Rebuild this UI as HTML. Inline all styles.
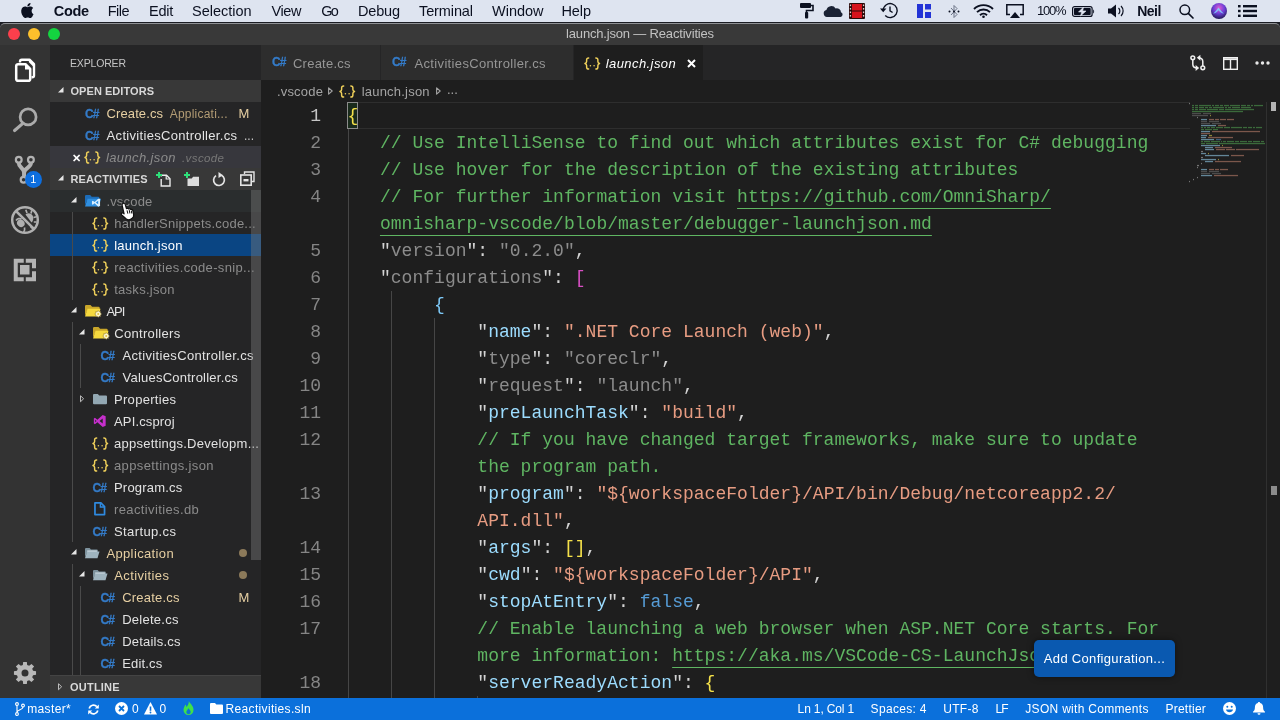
<!DOCTYPE html>
<html lang="en">
<head>
<meta charset="utf-8">
<title>launch.json — Reactivities</title>
<style>
*{box-sizing:border-box;margin:0;padding:0}
html,body{width:1280px;height:720px;overflow:hidden;background:#1e1e1e}
body{position:relative;will-change:transform;font-family:"Liberation Sans",sans-serif;font-size:13px;color:#ccc;-webkit-font-smoothing:antialiased}
.abs{position:absolute}
svg{display:block;overflow:visible}
/* mac menu bar */
#menubar{left:0;top:0;width:1280px;height:22px;background:#dee4f0;color:#0b1020;font-size:14.500px;line-height:22px;white-space:nowrap}
#menubar span.mi{position:absolute;top:0;height:22px}
/* title bar */
#titlebar{left:0;top:23px;width:1280px;height:22px;background:#393939;border-top:1px solid #8e9094;border-radius:5px 5px 0 0}
#titlebar .t{position:absolute;left:0;width:1280px;top:0;text-align:center;font-size:13px;line-height:20px;color:#c2c2c2;letter-spacing:-.18px}
.dot{position:absolute;top:4px;width:12px;height:12px;border-radius:50%}
/* activity */
#activity{left:0;top:45px;width:50px;height:653px;background:#333333}
/* sidebar */
#sidebar{left:50px;top:45px;width:211px;z-index:2;height:653px;background:#252526;overflow:hidden}
.hdr{position:absolute;left:0;width:211px;height:22px;background:#383838;font-weight:bold;font-size:11px;line-height:22px;color:#d8d8d8;}
.hdr .tx{position:absolute;left:20px;top:0}
.row{position:absolute;left:0;width:211px;height:22px;line-height:22px;font-size:13px;color:#e2e2e2;white-space:nowrap;overflow:hidden}
.row .tx{position:absolute;top:.5px}
.row svg{margin-top:0}
.row .cs{margin-top:.5px}
.cs{-webkit-text-stroke:.3px #347bc8;font-weight:bold;font-size:12px;color:#347bc8;letter-spacing:-.8px;line-height:22px;height:22px}
.dim{color:#8b8b8b}
.mod{color:#e6cfa2}
.desc{font-size:12px;color:#8f8f8f;margin-left:6px}
/* editor */
#tabs{left:260px;top:45px;width:1020px;height:35px;background:#252526}
.tab{position:absolute;top:0;height:35px;background:#2d2d2d;font-size:13px;line-height:35px;color:#969696;border-right:1px solid #252526}
.tab .tx{position:absolute;top:1px}
#crumbs{left:260px;top:80px;width:1020px;height:22px;background:#1e1e1e;font-size:13px;line-height:22px;color:#a4a4a4}
#editor{left:260px;top:102px;width:1020px;height:596px;background:#1e1e1e;overflow:hidden}
.ln{position:absolute;left:0;margin-top:1px;width:61px;text-align:right;font-family:"Liberation Mono",monospace;font-size:18px;line-height:27px;color:#858585;height:27px}
.cl{position:absolute;left:87.5px;margin-top:1px;font-family:"Liberation Mono",monospace;font-size:18px;line-height:27px;height:27px;white-space:pre;color:#d4d4d4;letter-spacing:.02px}
.c{color:#5fb562}
.k{color:#9cdcfe}
.s{color:#e79c82}
.g{color:#8c8c8c}
.b{color:#569cd6}
.u{text-decoration:underline;text-underline-offset:6px;text-decoration-thickness:1px}
.guide{position:absolute;width:1px;background:#464646}
/* status */
#status{left:0;top:698px;width:1280px;height:22px;background:#0b70db;color:#fff;font-size:12px;line-height:22.500px;white-space:nowrap}
#status span.si{position:absolute;top:0}
</style>
</head>
<body>

<!-- MENUBAR -->
<div id="menubar" class="abs">
  <svg class="abs" style="left:20px;top:2px" width="14" height="17" viewBox="0 0 14 17"><path fill="#0b1020" d="M11.6 9c0-1.9 1.5-2.8 1.6-2.9-.9-1.3-2.300-1.500-2.800-1.500-1.200-.1-2.300.7-2.900.7s-1.500-.7-2.500-.7C3.700 4.600 2.500 5.400 1.800 6.500.500 8.800 1.500 12.200 2.800 14.100c.6.900 1.400 1.900 2.400 1.900 1-.04 1.300-.6 2.500-.6 1.100 0 1.500.6 2.500.6s1.700-.9 2.300-1.800c.700-1 1-2.100 1-2.100S11.600 11.400 11.600 9zM9.700 3.300C10.200 2.700 10.600 1.800 10.500.900c-.8.030-1.700.5-2.300 1.200-.5.600-.900 1.500-.800 2.300.9.070 1.800-.4 2.300-1.100z"/></svg>
  <span class="mi" style="left:53.75px;letter-spacing:-0.333px;font-weight:bold">Code</span>
  <span class="mi" style="left:107.75px;letter-spacing:-0.536px">File</span>
  <span class="mi" style="left:149px;letter-spacing:-0.245px">Edit</span>
  <span class="mi" style="left:192px;letter-spacing:-0.018px">Selection</span>
  <span class="mi" style="left:271.5px;letter-spacing:-0.385px">View</span>
  <span class="mi" style="left:321.25px;letter-spacing:-1.844px">Go</span>
  <span class="mi" style="left:358px;letter-spacing:-0.18px">Debug</span>
  <span class="mi" style="left:419px;letter-spacing:-0.112px">Terminal</span>
  <span class="mi" style="left:492px;letter-spacing:-0.013px">Window</span>
  <span class="mi" style="left:561.5px;letter-spacing:-0.104px">Help</span>
  <!-- right icons -->
  <svg class="abs" style="left:800px;top:3px" width="14" height="16" viewBox="0 0 14 16"><rect x="0" y="0" width="11" height="5" rx="1" fill="#0b1020"/><path d="M11 2.500h2v5H6.500v2.500" fill="none" stroke="#0b1020" stroke-width="1.600"/><rect x="5" y="9" width="3.200" height="6.500" rx="1" fill="#0b1020"/></svg>
  <svg class="abs" style="left:822px;top:5px" width="22" height="12" viewBox="0 0 22 12"><path fill="#1a2234" d="M5 12a3.500 3.500 0 0 1-.6-6.900A5 5 0 0 1 13.600 3.500 4.200 4.200 0 0 1 19 7.200 2.500 2.500 0 0 1 18.500 12z"/></svg>
  <svg class="abs" style="left:849px;top:3px" width="16" height="16" viewBox="0 0 16 16"><rect width="16" height="16" rx="1" fill="#2a0a0a"/><rect x="3" y="1" width="10" height="6.500" fill="#d6121c"/><rect x="3" y="8.500" width="10" height="6.500" fill="#d6121c"/><g fill="#e8c9c9"><rect x="0.800" y="1.500" width="1.300" height="1.600"/><rect x="0.800" y="5" width="1.300" height="1.600"/><rect x="0.800" y="8.500" width="1.300" height="1.600"/><rect x="0.800" y="12" width="1.300" height="1.600"/><rect x="13.900" y="1.500" width="1.300" height="1.600"/><rect x="13.900" y="5" width="1.300" height="1.600"/><rect x="13.900" y="8.500" width="1.300" height="1.600"/><rect x="13.900" y="12" width="1.300" height="1.600"/></g></svg>
  <svg class="abs" style="left:879px;top:2px" width="19" height="17" viewBox="0 0 19 17"><path d="M4.200 8.500a7 7 0 1 1 2 5" fill="none" stroke="#0b1020" stroke-width="1.400"/><path d="M1 6.500h6.400L4.200 10.200z" fill="#0b1020"/><path d="M11 4.500v4.300l2.600 1.700" fill="none" stroke="#0b1020" stroke-width="1.400"/></svg>
  <svg class="abs" style="left:917px;top:4px" width="14" height="14" viewBox="0 0 14 14"><rect width="6" height="14" fill="#2233d6"/><rect x="8" y="0" width="6" height="5.500" fill="#2233d6"/><rect x="8" y="8" width="6" height="6" fill="#2233d6"/></svg>
  <svg class="abs" style="left:948px;top:4px" width="12" height="15" viewBox="0 0 12 15"><path d="M3 4l6 6.500-3 3V1.500l3 3L3 11" fill="none" stroke="#6b7386" stroke-width="1"/><circle cx="1.500" cy="7.500" r="1" fill="#0b1020"/><circle cx="10.500" cy="7.500" r="1" fill="#0b1020"/><circle cx="6" cy="7.500" r="1" fill="#0b1020"/></svg>
  <svg class="abs" style="left:973px;top:4px" width="21" height="14" viewBox="0 0 21 14"><g fill="none" stroke="#0b1020" stroke-width="1.900"><path d="M1 5a13.500 13.500 0 0 1 19 0"/><path d="M4 8.200a9.200 9.200 0 0 1 13 0"/><path d="M7 11.200a5 5 0 0 1 7 0"/></g><circle cx="10.500" cy="12.800" r="1.300" fill="#0b1020"/></svg>
  <svg class="abs" style="left:1006px;top:4px" width="18" height="14" viewBox="0 0 18 14"><path d="M4 10.500H.8V.8h16.400v9.700H14" fill="none" stroke="#0b1020" stroke-width="1.500"/><path d="M9 8l5 6H4z" fill="#0b1020"/></svg>
  <span class="mi" style="left:1037px;font-size:13px;letter-spacing:-1.222px">100%</span>
  <svg class="abs" style="left:1072px;top:6px" width="23" height="11" viewBox="0 0 23 11"><rect x=".6" y=".6" width="19.500" height="9.800" rx="2" fill="none" stroke="#0b1020" stroke-width="1.200"/><rect x="2" y="2" width="16.700" height="7" rx=".8" fill="#0b1020"/><path d="M21.200 3.500v4c1.200-.3 1.200-3.700 0-4z" fill="#0b1020"/><path d="M11.500 1L6.500 6h3.200L8.500 10l5.500-5h-3.300z" fill="#dee4f0" stroke="#dee4f0" stroke-width=".6"/></svg>
  <svg class="abs" style="left:1108px;top:4px" width="18" height="14" viewBox="0 0 18 14"><path d="M0 4.500h3L8 .5v13L3 9.500H0z" fill="#0b1020"/><path d="M10.500 4a4 4 0 0 1 0 6M13 2a7 7 0 0 1 0 10" fill="none" stroke="#0b1020" stroke-width="1.200"/></svg>
  <span class="mi" style="left:1137.300px;font-weight:bold;font-size:14px;letter-spacing:-0.557px">Neil</span>
  <svg class="abs" style="left:1179px;top:4px" width="15" height="15" viewBox="0 0 15 15"><circle cx="5.800" cy="5.800" r="4.800" fill="none" stroke="#0b1020" stroke-width="1.500"/><path d="M9.300 9.300l4.700 4.700" stroke="#0b1020" stroke-width="1.700" stroke-linecap="round"/></svg>
  <div class="abs" style="left:1210.500px;top:2.500px;width:16.500px;height:16.500px;border-radius:50%;background:radial-gradient(circle at 50% 32%,#e45ad2 0%,#6a3fd6 42%,#1a1546 85%)"></div>
  <svg class="abs" style="left:1210px;top:2px" width="17" height="17" viewBox="0 0 17 17"><path d="M3 11.500c2-1 3.500-3.500 5.500-6 2 2.500 3.500 5 5.500 6-2.500-.2-4-1.500-5.500-3.300C7 10 5.500 11.300 3 11.500z" fill="#7fd6ff" opacity=".85"/></svg>
  <svg class="abs" style="left:1238px;top:5px" width="19" height="12" viewBox="0 0 19 12"><g fill="#0b1020"><rect x="0" y="0" width="2.600" height="2.400"/><rect x="0" y="4.800" width="2.600" height="2.400"/><rect x="0" y="9.600" width="2.600" height="2.400"/><rect x="5" y="0" width="14" height="2.400"/><rect x="5" y="4.800" width="14" height="2.400"/><rect x="5" y="9.600" width="14" height="2.400"/></g></svg>
</div>

<!-- TITLEBAR -->
<div class="abs" style="left:0;top:22px;width:1280px;height:8px;background:#1b1d24"></div>
<div id="titlebar" class="abs">
  <div class="dot" style="left:8px;background:#fc3f4c"></div>
  <div class="dot" style="left:28px;background:#fdc02c"></div>
  <div class="dot" style="left:48px;background:#14d440"></div>
  <div class="t">launch.json — Reactivities</div>
</div>

<!-- ACTIVITY BAR -->
<div id="activity" class="abs">
  <!-- explorer + search -->
  <svg class="abs" style="left:0;top:0" width="50" height="100" viewBox="0 45 50 100"><g fill="none" stroke="#fff" stroke-linejoin="round"><path d="M20 62.500V61.500a1.800 1.800 0 0 1 1.800-1.800h7.700l4.500 4.500v11.300a1.800 1.800 0 0 1-1.800 1.800H31.500" stroke-width="2.400"/><path d="M16.200 66a1.800 1.800 0 0 1 1.800-1.800h7.500l4.700 4.700V79a1.800 1.800 0 0 1-1.800 1.800H18a1.800 1.800 0 0 1-1.800-1.800z" stroke-width="2.500"/></g><path d="M25 64v5.500h5.500z" fill="#fff"/><path d="M29.500 59.500l4.700 4.700v11.500h-1V66.500l-4.500-4.500z" fill="#fff"/>
  <circle cx="28.100" cy="116.900" r="8" fill="none" stroke="#ababab" stroke-width="2.700"/><path d="M22.300 123.900L14.600 130.500" stroke="#ababab" stroke-width="3.200" stroke-linecap="round"/></svg>
  <!-- git -->
  <svg class="abs" style="left:0;top:100px" width="50" height="60" viewBox="0 145 50 60"><g fill="none" stroke="#b2b2b2"><path d="M18.750 163c0 4.500 5.300 5 5.300 9.500v4M30.900 163c0 4.500-6.500 5-6.800 9.500" stroke-width="4"/><circle cx="18.750" cy="159.700" r="2.900" stroke-width="2.200" fill="#333"/><circle cx="30.900" cy="159.700" r="2.900" stroke-width="2.200" fill="#333"/><circle cx="23.600" cy="179.700" r="2.900" stroke-width="2.200" fill="#333"/></g></svg>
  <div class="abs" style="left:24.500px;top:125.500px;width:17.500px;height:17.500px;border-radius:50%;background:#0d6ede;color:#fff;font-size:11px;line-height:17.500px;text-align:center">1</div>
  <!-- debug + extensions -->
  <svg class="abs" style="left:0;top:150px" width="50" height="100" viewBox="0 195 50 100"><g fill="none" stroke="#b0b0b0"><circle cx="25" cy="220" r="12.800" stroke-width="2.500"/><path d="M15.800 210.800L34.200 229.200" stroke-width="2.600"/><path d="M16 220.500c1.500-2 4-2.500 5.500-1.500M24.500 227.500c.5 2 .2 3.500-1 5M27 213l-1.200-3.200M31 213.500l.8-3.200M33.500 217.500l3-.8M33.800 222h2.800M30.500 227c1.500.5 2.500 1.500 3 3" stroke-width="1.700"/></g><ellipse cx="20.800" cy="223.300" rx="3.600" ry="4" fill="#b0b0b0" transform="rotate(-40 20.800 223.300)"/><path d="M25.500 214.500c2.200-2.200 6-1.200 7.300 1.500 1 2.300.5 5-1.300 6.500z" fill="#b0b0b0"/>
  <g fill="#b4b4b4"><path d="M13.750 258.750h10v4h-6v14.500h6v4h-10z"/><path d="M25.800 258.750H36v9.600h-4v-5.600h-6.200z"/><path d="M25.800 281.250H36v-9.900h-4v5.900h-6.200z"/><rect x="20" y="265" width="9.500" height="9.500"/></g></svg>
  <!-- gear -->
  <svg class="abs" style="left:0;top:0" width="50" height="653" viewBox="0 0 50 653"><path fill="#b8b8b8" fill-rule="evenodd" d="M33.02 625.85L36.05 626.15L36.05 629.85L33.02 630.15L32.19 632.15L34.12 634.50L31.50 637.12L29.15 635.19L27.15 636.02L26.85 639.05L23.15 639.05L22.85 636.02L20.85 635.19L18.50 637.12L15.88 634.50L17.81 632.15L16.98 630.15L13.95 629.85L13.95 626.15L16.98 625.85L17.81 623.85L15.88 621.50L18.50 618.88L20.85 620.81L22.85 619.98L23.15 616.95L26.85 616.95L27.15 619.98L29.15 620.81L31.50 618.88L34.12 621.50L32.19 623.85zM21.50 628.00 a3.500 3.500 0 1 0 7 0 a3.500 3.500 0 1 0 -7 0z"/></svg>
</div>

<!-- SIDEBAR -->
<div id="sidebar" class="abs">


<div class="abs" style="left:20px;top:0;height:35px;line-height:36px;font-size:10.500px;color:#c4c4c4;letter-spacing:-.167px">EXPLORER</div>
<div class="hdr" style="top:35px;"><svg class="abs" style="left:7.5px;top:6.500px" width="5.500" height="5.500" viewBox="0 0 7 7" preserveAspectRatio="none"><path d="M7 0v7H0z" fill="#e6e6e6"/></svg><span class="tx " style="left:20.5px;;letter-spacing:0.05px">OPEN EDITORS</span></div>
<div class="row" style="top:57px;"><span class="abs cs" style="left:35px;top:0">C#</span><span class="tx mod" style="left:56.6px;;letter-spacing:0.095px">Create.cs</span><span class="tx " style="left:119.7px;color:#b39c74;font-size:12px;letter-spacing:0.223px">Applicati...</span><span class="tx mod" style="left:188.6px;">M</span></div>
<div class="row" style="top:79px;"><span class="abs cs" style="left:35px;top:0">C#</span><span class="tx " style="left:56.6px;color:#e4e4e4;letter-spacing:0.311px">ActivitiesController.cs</span><span class="tx " style="left:194px;color:#c8c8c8;font-size:12px">...</span></div>
<div class="row" style="top:101px;background:#37373d"><span class="tx " style="left:22px;color:#fff;font-size:11px;font-weight:bold">&#x2715;</span><svg class="abs" style="left:33.5px;top:4.5px" width="16.5" height="13" viewBox="0 0 17 13" preserveAspectRatio="none"><g fill="none" stroke="#efd05a" stroke-width="1.500" stroke-linecap="round" stroke-linejoin="round"><path d="M4.800 .9c-1.700 0-2.100.6-2.100 1.800v1.800c0 1.100-.6 1.700-1.700 2 1.100.3 1.700.9 1.700 2v1.800c0 1.200.4 1.800 2.100 1.800"/><path d="M12.200 .9c1.700 0 2.100.6 2.100 1.800v1.800c0 1.100.6 1.700 1.700 2-1.100.3-1.700.9-1.700 2v1.800c0 1.200-.4 1.800-2.100 1.800"/></g><circle cx="6.600" cy="8.800" r=".8" fill="#efd05a"/><circle cx="10.400" cy="8.800" r=".8" fill="#efd05a"/></svg><span class="tx dim" style="left:56px;font-style:italic;letter-spacing:0.37px">launch.json</span><span class="tx " style="left:132px;font-style:italic;font-size:11.500px;color:#777;letter-spacing:0.398px">.vscode</span></div>
<div class="hdr" style="top:123px;"><svg class="abs" style="left:7.5px;top:6.500px" width="5.500" height="5.500" viewBox="0 0 7 7" preserveAspectRatio="none"><path d="M7 0v7H0z" fill="#e6e6e6"/></svg><span class="tx " style="left:20.5px;;letter-spacing:0.117px">REACTIVITIES</span><svg class="abs" style="left:105.500px;top:4px" width="16" height="15" viewBox="0 0 16 15"><path d="M5.200 4.500V3.200h5.300l3.500 3.500v7.300H5.200V7" fill="none" stroke="#ececec" stroke-width="1.400"/><path d="M10.200 3.400v3.600h3.600" fill="none" stroke="#ececec" stroke-width="1.200"/><path d="M0 3h6M3 0v6" stroke="#2ee07a" stroke-width="2"/></svg>
<svg class="abs" style="left:133.500px;top:4px" width="16" height="15" viewBox="0 0 16 15"><path d="M3.500 6.500h4.200l1.400-1.800H15v9.300H3.500z" fill="#dcdcdc"/><path d="M0 3h6M3 0v6" stroke="#2ee07a" stroke-width="2"/></svg>
<svg class="abs" style="left:162px;top:4px" width="14" height="15" viewBox="0 0 14 15"><path d="M9.500 3.300A5.400 5.400 0 1 1 4 3.600" fill="none" stroke="#e4e4e4" stroke-width="1.700"/><path d="M6.500 0l4.500 3.200L6.500 6z" fill="#e4e4e4"/></svg>
<svg class="abs" style="left:190px;top:3px" width="15" height="15" viewBox="0 0 15 15"><path d="M4.500 3V1h9.500v9.500h-2" fill="none" stroke="#e4e4e4" stroke-width="1.400"/><rect x=".8" y="4" width="10.400" height="10.200" fill="none" stroke="#e4e4e4" stroke-width="1.600"/><rect x="3.500" y="8" width="5" height="2.400" fill="#e4e4e4"/></svg></div>
<div class="row" style="top:145px;background:#2a2d2e"><svg class="abs" style="left:21px;top:6.500px" width="5.500" height="5.500" viewBox="0 0 7 7" preserveAspectRatio="none"><path d="M7 0v7H0z" fill="#e6e6e6"/></svg><svg class="abs" style="left:34.5px;top:5.25px" width="16" height="11.5" viewBox="0 0 17 12" preserveAspectRatio="none"><path d="M0 1.200A1.200 1.200 0 0 1 1.200 0h4.300l1.600 1.700h6.900a1.200 1.200 0 0 1 1.200 1.200V4.500H3L0 10.500z" fill="#1c6cb8"/><path d="M2.700 3.800h14.300l-2.400 8.200H0z" fill="#2f8fe0"/><path d="M16 3.800v7.800l-1.900.6-3.900-3.600-1.900 1.500-.9-.5V6.400l.9-.5 1.900 1.500 3.900-3.600zM14 6L11.500 7.700 14 9.600z" fill="#d8eeff"/></svg><span class="tx dim" style="left:56.4px;;letter-spacing:0.181px">.vscode</span></div>
<div class="row" style="top:167px;"><svg class="abs" style="left:42px;top:4.5px" width="16.5" height="13" viewBox="0 0 17 13" preserveAspectRatio="none"><g fill="none" stroke="#efd05a" stroke-width="1.500" stroke-linecap="round" stroke-linejoin="round"><path d="M4.800 .9c-1.700 0-2.100.6-2.100 1.800v1.800c0 1.100-.6 1.700-1.700 2 1.100.3 1.700.9 1.700 2v1.800c0 1.200.4 1.800 2.100 1.800"/><path d="M12.200 .9c1.700 0 2.100.6 2.100 1.800v1.800c0 1.100.6 1.700 1.700 2-1.100.3-1.700.9-1.700 2v1.800c0 1.200-.4 1.800-2.100 1.800"/></g><circle cx="6.600" cy="8.800" r=".8" fill="#efd05a"/><circle cx="10.400" cy="8.800" r=".8" fill="#efd05a"/></svg><span class="tx dim" style="left:64.2px;;letter-spacing:0.221px">handlerSnippets.code...</span></div>
<div class="row" style="top:189px;background:#0a4583"><svg class="abs" style="left:42px;top:4.5px" width="16.5" height="13" viewBox="0 0 17 13" preserveAspectRatio="none"><g fill="none" stroke="#efd05a" stroke-width="1.500" stroke-linecap="round" stroke-linejoin="round"><path d="M4.800 .9c-1.700 0-2.100.6-2.100 1.800v1.800c0 1.100-.6 1.700-1.700 2 1.100.3 1.700.9 1.700 2v1.800c0 1.200.4 1.800 2.100 1.800"/><path d="M12.200 .9c1.700 0 2.100.6 2.100 1.800v1.800c0 1.100.6 1.700 1.700 2-1.100.3-1.700.9-1.700 2v1.800c0 1.200-.4 1.800-2.100 1.800"/></g><circle cx="6.600" cy="8.800" r=".8" fill="#efd05a"/><circle cx="10.400" cy="8.800" r=".8" fill="#efd05a"/></svg><span class="tx " style="left:64.2px;color:#fff;letter-spacing:0.25px">launch.json</span></div>
<div class="row" style="top:211px;"><svg class="abs" style="left:42px;top:4.5px" width="16.5" height="13" viewBox="0 0 17 13" preserveAspectRatio="none"><g fill="none" stroke="#efd05a" stroke-width="1.500" stroke-linecap="round" stroke-linejoin="round"><path d="M4.800 .9c-1.700 0-2.100.6-2.100 1.800v1.800c0 1.100-.6 1.700-1.700 2 1.100.3 1.700.9 1.700 2v1.800c0 1.200.4 1.800 2.100 1.800"/><path d="M12.200 .9c1.700 0 2.100.6 2.100 1.800v1.800c0 1.100.6 1.700 1.700 2-1.100.3-1.700.9-1.700 2v1.800c0 1.200-.4 1.800-2.100 1.800"/></g><circle cx="6.600" cy="8.800" r=".8" fill="#efd05a"/><circle cx="10.400" cy="8.800" r=".8" fill="#efd05a"/></svg><span class="tx dim" style="left:64.2px;;letter-spacing:0.34px">reactivities.code-snip...</span></div>
<div class="row" style="top:233px;"><svg class="abs" style="left:42px;top:4.5px" width="16.5" height="13" viewBox="0 0 17 13" preserveAspectRatio="none"><g fill="none" stroke="#efd05a" stroke-width="1.500" stroke-linecap="round" stroke-linejoin="round"><path d="M4.800 .9c-1.700 0-2.100.6-2.100 1.800v1.800c0 1.100-.6 1.700-1.700 2 1.100.3 1.700.9 1.700 2v1.800c0 1.200.4 1.800 2.100 1.800"/><path d="M12.200 .9c1.700 0 2.100.6 2.100 1.800v1.800c0 1.100.6 1.700 1.700 2-1.100.3-1.700.9-1.700 2v1.800c0 1.200-.4 1.800-2.100 1.800"/></g><circle cx="6.600" cy="8.800" r=".8" fill="#efd05a"/><circle cx="10.400" cy="8.800" r=".8" fill="#efd05a"/></svg><span class="tx dim" style="left:64.2px;;letter-spacing:0.276px">tasks.json</span></div>
<div class="row" style="top:255px;"><svg class="abs" style="left:21px;top:6.500px" width="5.500" height="5.500" viewBox="0 0 7 7" preserveAspectRatio="none"><path d="M7 0v7H0z" fill="#e6e6e6"/></svg><svg class="abs" style="left:34.8px;top:4.5px" width="17" height="13" viewBox="0 0 17 13" preserveAspectRatio="none"><path d="M0 1.200A1.200 1.200 0 0 1 1.200 0h4.300l1.600 1.700h6.400a1.200 1.200 0 0 1 1.200 1.200V4.500H3L0 10.500z" fill="#c9a62a"/><path d="M2.500 3.800h13l-1.800 7.700H0z" fill="#f5d93e"/><path d="M16.70 9.00L15.42 9.92L15.67 11.47L14.12 11.22L13.20 12.50L12.28 11.22L10.73 11.47L10.98 9.92L9.70 9.00L10.98 8.08L10.73 6.53L12.28 6.78L13.20 5.50L14.12 6.78L15.67 6.53L15.42 8.08z" fill="#fff8cc" stroke="#6a5714" stroke-width=".4"/><circle cx="13.2" cy="9" r="1" fill="#e2c340"/></svg><span class="tx " style="left:56.4px;;letter-spacing:-0.977px">API</span></div>
<div class="row" style="top:277px;"><svg class="abs" style="left:29px;top:6.500px" width="5.500" height="5.500" viewBox="0 0 7 7" preserveAspectRatio="none"><path d="M7 0v7H0z" fill="#e6e6e6"/></svg><svg class="abs" style="left:42.8px;top:4.5px" width="17" height="13" viewBox="0 0 17 13" preserveAspectRatio="none"><path d="M0 1.200A1.200 1.200 0 0 1 1.200 0h4.300l1.600 1.700h6.400a1.200 1.200 0 0 1 1.200 1.200V4.500H3L0 10.500z" fill="#c9a62a"/><path d="M2.500 3.800h13l-1.800 7.700H0z" fill="#f5d93e"/><path d="M16.70 9.00L15.42 9.92L15.67 11.47L14.12 11.22L13.20 12.50L12.28 11.22L10.73 11.47L10.98 9.92L9.70 9.00L10.98 8.08L10.73 6.53L12.28 6.78L13.20 5.50L14.12 6.78L15.67 6.53L15.42 8.08z" fill="#fff8cc" stroke="#6a5714" stroke-width=".4"/><circle cx="13.2" cy="9" r="1" fill="#e2c340"/></svg><span class="tx " style="left:64.2px;;letter-spacing:0.323px">Controllers</span></div>
<div class="row" style="top:299px;"><span class="abs cs" style="left:50.5px;top:0">C#</span><span class="tx " style="left:72.5px;;letter-spacing:0.338px">ActivitiesController.cs</span></div>
<div class="row" style="top:321px;"><span class="abs cs" style="left:50.5px;top:0">C#</span><span class="tx " style="left:72.5px;;letter-spacing:0.235px">ValuesController.cs</span></div>
<div class="row" style="top:343px;"><svg class="abs" style="left:29.5px;top:7px" width="4.300" height="7.500" viewBox="0 0 5 9" preserveAspectRatio="none"><path d="M.600.900L4.200 4.500 .600 8.100z" fill="none" stroke="#c8c8c8" stroke-width="1.100" stroke-linejoin="round"/></svg><svg class="abs" style="left:42.8px;top:5.9px" width="14" height="10.2" viewBox="0 0 16 12" preserveAspectRatio="none"><path d="M0 1.200A1.200 1.200 0 0 1 1.200 0h4.300l1.600 1.700h7.700a1.200 1.200 0 0 1 1.200 1.200V10.800a1.200 1.200 0 0 1-1.200 1.200H1.200A1.200 1.200 0 0 1 0 10.800z" fill="#93a8b3"/></svg><span class="tx " style="left:64px;;letter-spacing:0.304px">Properties</span></div>
<div class="row" style="top:365px;"><svg class="abs" style="left:43px;top:5px" width="13.5" height="12" viewBox="0 0 16 14" preserveAspectRatio="none"><path d="M11.500 0l3.500 1.500v11L11.500 14 5.200 8.400 2.300 10.700 1 10V4l1.300-.7 2.900 2.300zM11.500 4.200L7.700 7l3.800 2.800zM2.600 5.500v3L4.200 7z" fill="#c62fcc"/></svg><span class="tx " style="left:64px;;letter-spacing:0.15px">API.csproj</span></div>
<div class="row" style="top:387px;"><svg class="abs" style="left:42px;top:4.5px" width="16.5" height="13" viewBox="0 0 17 13" preserveAspectRatio="none"><g fill="none" stroke="#efd05a" stroke-width="1.500" stroke-linecap="round" stroke-linejoin="round"><path d="M4.800 .9c-1.700 0-2.100.6-2.100 1.800v1.800c0 1.100-.6 1.700-1.700 2 1.100.3 1.700.9 1.700 2v1.800c0 1.200.4 1.800 2.100 1.800"/><path d="M12.200 .9c1.700 0 2.100.6 2.100 1.800v1.800c0 1.100.6 1.700 1.700 2-1.100.3-1.700.9-1.700 2v1.800c0 1.200-.4 1.800-2.100 1.800"/></g><circle cx="6.600" cy="8.800" r=".8" fill="#efd05a"/><circle cx="10.400" cy="8.800" r=".8" fill="#efd05a"/></svg><span class="tx " style="left:64px;;letter-spacing:0.25px">appsettings.Developm...</span></div>
<div class="row" style="top:409px;"><svg class="abs" style="left:42px;top:4.5px" width="16.5" height="13" viewBox="0 0 17 13" preserveAspectRatio="none"><g fill="none" stroke="#efd05a" stroke-width="1.500" stroke-linecap="round" stroke-linejoin="round"><path d="M4.800 .9c-1.700 0-2.100.6-2.100 1.800v1.800c0 1.100-.6 1.700-1.700 2 1.100.3 1.700.9 1.700 2v1.800c0 1.200.4 1.800 2.100 1.800"/><path d="M12.200 .9c1.700 0 2.100.6 2.100 1.800v1.800c0 1.100.6 1.700 1.700 2-1.100.3-1.700.9-1.700 2v1.800c0 1.200-.4 1.800-2.100 1.800"/></g><circle cx="6.600" cy="8.800" r=".8" fill="#efd05a"/><circle cx="10.400" cy="8.800" r=".8" fill="#efd05a"/></svg><span class="tx dim" style="left:64px;;letter-spacing:0.374px">appsettings.json</span></div>
<div class="row" style="top:431px;"><span class="abs cs" style="left:42.5px;top:0">C#</span><span class="tx " style="left:64px;;letter-spacing:0.203px">Program.cs</span></div>
<div class="row" style="top:453px;"><svg class="abs" style="left:44.2px;top:4.25px" width="11.5" height="13.5" viewBox="0 0 12 14" preserveAspectRatio="none"><path d="M1 1h6.200L11 4.800V13H1z" fill="none" stroke="#2f8ae0" stroke-width="1.800" stroke-linejoin="round"/><path d="M6.700 1.200v4h4" fill="none" stroke="#2f8ae0" stroke-width="1.500"/></svg><span class="tx dim" style="left:64px;;letter-spacing:0.379px">reactivities.db</span></div>
<div class="row" style="top:475px;"><span class="abs cs" style="left:42.5px;top:0">C#</span><span class="tx " style="left:64px;;letter-spacing:0.385px">Startup.cs</span></div>
<div class="row" style="top:497px;"><svg class="abs" style="left:21px;top:6.500px" width="5.500" height="5.500" viewBox="0 0 7 7" preserveAspectRatio="none"><path d="M7 0v7H0z" fill="#e6e6e6"/></svg><svg class="abs" style="left:35px;top:5.9px" width="14.5" height="10.2" viewBox="0 0 15 10.500" preserveAspectRatio="none"><path d="M0 1.100A1.100 1.100 0 0 1 1.100 0h3.700l1.400 1.500h6a1.100 1.100 0 0 1 1.100 1.100V4H2.600L0 9.300z" fill="#7d929d"/><path d="M2.300 2.600h10v1.400h-10z" fill="#dce6ec"/><path d="M2.200 3.700h12.800l-2.100 6.800H0z" fill="#9fb4bf"/></svg><span class="tx mod" style="left:56.4px;;letter-spacing:0.367px">Application</span><span class="abs" style="left:189px;top:7px;width:8px;height:8px;border-radius:50%;background:#8c7a5a"></span></div>
<div class="row" style="top:519px;"><svg class="abs" style="left:29px;top:6.500px" width="5.500" height="5.500" viewBox="0 0 7 7" preserveAspectRatio="none"><path d="M7 0v7H0z" fill="#e6e6e6"/></svg><svg class="abs" style="left:43px;top:5.9px" width="14.5" height="10.2" viewBox="0 0 15 10.500" preserveAspectRatio="none"><path d="M0 1.100A1.100 1.100 0 0 1 1.100 0h3.700l1.400 1.500h6a1.100 1.100 0 0 1 1.100 1.100V4H2.600L0 9.300z" fill="#7d929d"/><path d="M2.300 2.600h10v1.400h-10z" fill="#dce6ec"/><path d="M2.200 3.700h12.800l-2.100 6.800H0z" fill="#9fb4bf"/></svg><span class="tx mod" style="left:64.3px;;letter-spacing:0.367px">Activities</span><span class="abs" style="left:189px;top:7px;width:8px;height:8px;border-radius:50%;background:#8c7a5a"></span></div>
<div class="row" style="top:541px;"><span class="abs cs" style="left:50.5px;top:0">C#</span><span class="tx mod" style="left:72.2px;;letter-spacing:0.207px">Create.cs</span><span class="tx mod" style="left:188.5px;">M</span></div>
<div class="row" style="top:563px;"><span class="abs cs" style="left:50.5px;top:0">C#</span><span class="tx " style="left:72.2px;;letter-spacing:0.25px">Delete.cs</span></div>
<div class="row" style="top:585px;"><span class="abs cs" style="left:50.5px;top:0">C#</span><span class="tx " style="left:72.2px;;letter-spacing:0.216px">Details.cs</span></div>
<div class="row" style="top:607px;"><span class="abs cs" style="left:50.5px;top:0">C#</span><span class="tx " style="left:72.2px;;letter-spacing:0.181px">Edit.cs</span></div>
<div class="abs" style="left:22px;top:167px;width:1px;height:88px;background:#4a4a4a"></div>
<div class="abs" style="left:22px;top:277px;width:1px;height:220px;background:#4a4a4a"></div>
<div class="abs" style="left:30px;top:299px;width:1px;height:44px;background:#4a4a4a"></div>
<div class="abs" style="left:22px;top:519px;width:1px;height:111px;background:#4a4a4a"></div>
<div class="abs" style="left:30px;top:541px;width:1px;height:89px;background:#4a4a4a"></div>
<div class="hdr" style="top:631px;top:630px;height:23px;border-top:1px solid #444"><svg class="abs" style="left:8px;top:7px" width="4.300" height="7.500" viewBox="0 0 5 9" preserveAspectRatio="none"><path d="M.600.900L4.200 4.500 .600 8.100z" fill="none" stroke="#c8c8c8" stroke-width="1.100" stroke-linejoin="round"/></svg><span class="tx " style="left:20px;;letter-spacing:0.22px">OUTLINE</span></div>
<div class="abs" style="left:201px;top:145px;width:10px;height:370px;background:rgba(121,121,121,.42)"></div>
<svg class="abs" style="left:68px;top:157px" width="18" height="19" viewBox="0 0 16 17"><path d="M4.500 1.200c.9-.5 1.700 0 1.900.8L7.500 6l.6-.2c.6-.2 1.200 0 1.500.5.700-.4 1.500-.200 1.800.4.800-.3 1.600.1 1.800.9l.7 3.400c.3 1.400-.2 2.800-1.300 3.600l-1 .7c-1.300.9-3 .9-4.200-.1L3.300 11.600c-.5-.5-.5-1.200 0-1.600.5-.4 1.100-.3 1.600.1l.5.5L3.600 2.900c-.2-.7.200-1.400.9-1.700z" fill="#fff" stroke="#111" stroke-width="1.100" stroke-linejoin="round"/><path d="M8 7.500l.8 3M10 7.300l.6 2.800M11.800 7.800l.5 2.500" stroke="#111" stroke-width=".9"/></svg>
</div>
<!-- TABS -->
<div id="tabs" class="abs">
  <div class="tab" style="left:0;width:121px"><span class="abs cs" style="left:12px;top:6px">C#</span><span class="tx" style="left:33px;letter-spacing:.232px">Create.cs</span></div>
  <div class="tab" style="left:121px;width:193px"><span class="abs cs" style="left:11px;top:6px">C#</span><span class="tx" style="left:33.500px;letter-spacing:.343px">ActivitiesController.cs</span></div>
  <div class="tab" style="left:314px;width:130px;background:#1e1e1e;color:#fff"><svg class="abs" style="left:9.500px;top:12px" width="16.500" height="13" viewBox="0 0 17 13" preserveAspectRatio="none"><g fill="none" stroke="#efd05a" stroke-width="1.500" stroke-linecap="round" stroke-linejoin="round"><path d="M4.800 .9c-1.700 0-2.100.6-2.100 1.800v1.800c0 1.100-.6 1.700-1.700 2 1.100.3 1.700.9 1.700 2v1.800c0 1.200.4 1.800 2.100 1.800"/><path d="M12.200 .9c1.700 0 2.100.6 2.100 1.800v1.800c0 1.100.6 1.700 1.700 2-1.100.3-1.700.9-1.700 2v1.800c0 1.200-.4 1.800-2.100 1.800"/></g><circle cx="6.600" cy="8.800" r=".8" fill="#efd05a"/><circle cx="10.400" cy="8.800" r=".8" fill="#efd05a"/></svg><span class="tx" style="left:31.700px;font-style:italic;letter-spacing:.43px">launch.json</span><svg class="abs" style="left:112.500px;top:14px" width="9" height="9" viewBox="0 0 9 9"><path d="M1 1l7 7M8 1L1 8" stroke="#fff" stroke-width="2"/></svg></div>
  <!-- actions -->
  <svg class="abs" style="left:930px;top:9px" width="16" height="18" viewBox="0 0 16 18"><g fill="none" stroke="#f0f0f0" stroke-width="1.500"><circle cx="2.800" cy="3.800" r="1.900"/><circle cx="12.800" cy="13.800" r="1.900"/><path d="M2.800 5.700v4.500c0 2.300 1.500 3.800 4.700 3.800M12.800 11.900V7.500c0-2.300-1.500-3.800-4.700-3.800"/></g><path d="M5.600 11l3.600 3L5.600 17z" fill="#f0f0f0"/><path d="M10.400 0.700L6.800 3.700l3.600 3z" fill="#f0f0f0"/></svg>
  <svg class="abs" style="left:962.500px;top:11.500px" width="15" height="13" viewBox="0 0 15 13"><rect x=".7" y=".7" width="13.600" height="11.600" fill="none" stroke="#f0f0f0" stroke-width="1.400"/><path d="M.7 2.200h13.600" stroke="#f0f0f0" stroke-width="1.800"/><path d="M7.500 2v10" stroke="#f0f0f0" stroke-width="1.400"/></svg>
  <svg class="abs" style="left:995px;top:16px" width="15" height="4" viewBox="0 0 15 4"><circle cx="2" cy="2" r="1.700" fill="#e8e8e8"/><circle cx="7.500" cy="2" r="1.700" fill="#e8e8e8"/><circle cx="13" cy="2" r="1.700" fill="#e8e8e8"/></svg>
</div>

<!-- BREADCRUMBS -->
<div id="crumbs" class="abs">
  <span class="abs" style="left:16.900px;top:.5px;letter-spacing:.198px">.vscode</span>
  <svg class="abs" style="left:68px;top:7px" width="5" height="8" viewBox="0 0 5 8"><path d="M.600.800L4.200 4 .600 7.200z" fill="none" stroke="#a4a4a4" stroke-width="1.100" stroke-linejoin="round"/></svg>
  <svg class="abs" style="left:79px;top:5px" width="16.500" height="13" viewBox="0 0 17 13" preserveAspectRatio="none"><g fill="none" stroke="#efd05a" stroke-width="1.500" stroke-linecap="round" stroke-linejoin="round"><path d="M4.800 .9c-1.700 0-2.100.6-2.100 1.800v1.800c0 1.100-.6 1.700-1.700 2 1.100.3 1.700.9 1.700 2v1.800c0 1.200.4 1.800 2.100 1.800"/><path d="M12.200 .9c1.700 0 2.100.6 2.100 1.800v1.800c0 1.100.6 1.700 1.700 2-1.100.3-1.700.9-1.700 2v1.800c0 1.200-.4 1.800-2.100 1.800"/></g><circle cx="6.600" cy="8.800" r=".8" fill="#efd05a"/><circle cx="10.400" cy="8.800" r=".8" fill="#efd05a"/></svg>
  <span class="abs" style="left:101.700px;top:.5px;letter-spacing:.21px">launch.json</span>
  <svg class="abs" style="left:176px;top:7px" width="5" height="8" viewBox="0 0 5 8"><path d="M.600.800L4.200 4 .600 7.200z" fill="none" stroke="#a4a4a4" stroke-width="1.100" stroke-linejoin="round"/></svg>
  <span class="abs" style="left:187px;top:-1px">...</span>
</div>

<!-- EDITOR -->
<div id="editor" class="abs">
<div class="abs" style="left:87px;top:0;width:843px;height:27px;border-top:1px solid #2e2e2e;border-bottom:1px solid #2e2e2e"></div>
<div class="abs" style="left:87px;top:0;width:11px;height:27px;border:1px solid #8c8c8c;background:#1a2b1c"></div>
<div class="guide" style="left:87.5px;top:27px;height:594px"></div>
<div class="guide" style="left:130.78px;top:189px;height:432px"></div>
<div class="guide" style="left:174.06px;top:216px;height:405px"></div>
<div class="guide" style="left:217.34px;top:594px;height:27px"></div>
<div class="ln" style="top:0px;color:#c6c6c6">1</div>
<div class="cl" style="top:0px;left:87.5px"><span style="color:#f5e14a">{</span></div>
<div class="ln" style="top:27px">2</div>
<div class="cl" style="top:27px;left:119.96px"><span class="c">// Use IntelliSense to find out which attributes exist for C# debugging</span></div>
<div class="ln" style="top:54px">3</div>
<div class="cl" style="top:54px;left:119.96px"><span class="c">// Use hover for the description of the existing attributes</span></div>
<div class="ln" style="top:81px">4</div>
<div class="cl" style="top:81px;left:119.96px"><span class="c">// For further information visit </span><span class="c u">https://github.com/OmniSharp/</span></div>
<div class="cl" style="top:108px;left:119.96px"><span class="c u">omnisharp-vscode/blob/master/debugger-launchjson.md</span></div>
<div class="ln" style="top:135px">5</div>
<div class="cl" style="top:135px;left:119.96px">"<span class="g">version</span>": <span class="g">"0.2.0"</span>,</div>
<div class="ln" style="top:162px">6</div>
<div class="cl" style="top:162px;left:119.96px">"<span class="g">configurations</span>": <span style="color:#d94fc5">[</span></div>
<div class="ln" style="top:189px">7</div>
<div class="cl" style="top:189px;left:174.06px"><span style="color:#7cc7f5">{</span></div>
<div class="ln" style="top:216px">8</div>
<div class="cl" style="top:216px;left:217.34px">"<span class="k">name</span>": <span class="s">".NET Core Launch (web)"</span>,</div>
<div class="ln" style="top:243px">9</div>
<div class="cl" style="top:243px;left:217.34px">"<span class="g">type</span>": <span class="g">"coreclr"</span>,</div>
<div class="ln" style="top:270px">10</div>
<div class="cl" style="top:270px;left:217.34px">"<span class="g">request</span>": <span class="g">"launch"</span>,</div>
<div class="ln" style="top:297px">11</div>
<div class="cl" style="top:297px;left:217.34px">"<span class="k">preLaunchTask</span>": <span class="s">"build"</span>,</div>
<div class="ln" style="top:324px">12</div>
<div class="cl" style="top:324px;left:217.34px"><span class="c">// If you have changed target frameworks, make sure to update</span></div>
<div class="cl" style="top:351px;left:217.34px"><span class="c">the program path.</span></div>
<div class="ln" style="top:378px">13</div>
<div class="cl" style="top:378px;left:217.34px">"<span class="k">program</span>": <span class="s">"${workspaceFolder}/API/bin/Debug/netcoreapp2.2/</span></div>
<div class="cl" style="top:405px;left:217.34px"><span class="s">API.dll"</span>,</div>
<div class="ln" style="top:432px">14</div>
<div class="cl" style="top:432px;left:217.34px">"<span class="k">args</span>": <span style="color:#f5e14a">[]</span>,</div>
<div class="ln" style="top:459px">15</div>
<div class="cl" style="top:459px;left:217.34px">"<span class="k">cwd</span>": <span class="s">"${workspaceFolder}/API"</span>,</div>
<div class="ln" style="top:486px">16</div>
<div class="cl" style="top:486px;left:217.34px">"<span class="k">stopAtEntry</span>": <span class="b">false</span>,</div>
<div class="ln" style="top:513px">17</div>
<div class="cl" style="top:513px;left:217.34px"><span class="c">// Enable launching a web browser when ASP.NET Core starts. For</span></div>
<div class="cl" style="top:540px;left:217.34px"><span class="c">more information: </span><span class="c u">https://aka.ms/VSCode-CS-LaunchJson-WebBrowser</span></div>
<div class="ln" style="top:567px">18</div>
<div class="cl" style="top:567px;left:217.34px">"<span class="k">serverReadyAction</span>": <span style="color:#f5e14a">{</span></div>
<div class="ln" style="top:594px">19</div>
<div class="cl" style="top:594px;left:260.62px">"<span class="k">action</span>": <span class="s">"openExternally"</span>,</div>
<svg class="abs" style="left:929px;top:0" width="78" height="90" viewBox="0 0 78 90"><rect x="0" y="0.9" width="1" height="1.3" fill="#c8c8c8" opacity="0.5"/><rect x="3" y="2.9" width="2" height="1.3" fill="#57b357" opacity="0.5"/><rect x="6" y="2.9" width="3" height="1.3" fill="#57b357" opacity="0.5"/><rect x="10" y="2.9" width="12" height="1.3" fill="#57b357" opacity="0.5"/><rect x="23" y="2.9" width="2" height="1.3" fill="#57b357" opacity="0.5"/><rect x="26" y="2.9" width="4" height="1.3" fill="#57b357" opacity="0.5"/><rect x="31" y="2.9" width="3" height="1.3" fill="#57b357" opacity="0.5"/><rect x="35" y="2.9" width="5" height="1.3" fill="#57b357" opacity="0.5"/><rect x="41" y="2.9" width="10" height="1.3" fill="#57b357" opacity="0.5"/><rect x="52" y="2.9" width="5" height="1.3" fill="#57b357" opacity="0.5"/><rect x="58" y="2.9" width="3" height="1.3" fill="#57b357" opacity="0.5"/><rect x="62" y="2.9" width="2" height="1.3" fill="#57b357" opacity="0.5"/><rect x="65" y="2.9" width="9" height="1.3" fill="#57b357" opacity="0.5"/><rect x="3" y="4.9" width="2" height="1.3" fill="#57b357" opacity="0.5"/><rect x="6" y="4.9" width="3" height="1.3" fill="#57b357" opacity="0.5"/><rect x="10" y="4.9" width="5" height="1.3" fill="#57b357" opacity="0.5"/><rect x="16" y="4.9" width="3" height="1.3" fill="#57b357" opacity="0.5"/><rect x="20" y="4.9" width="3" height="1.3" fill="#57b357" opacity="0.5"/><rect x="24" y="4.9" width="11" height="1.3" fill="#57b357" opacity="0.5"/><rect x="36" y="4.9" width="2" height="1.3" fill="#57b357" opacity="0.5"/><rect x="39" y="4.9" width="3" height="1.3" fill="#57b357" opacity="0.5"/><rect x="43" y="4.9" width="8" height="1.3" fill="#57b357" opacity="0.5"/><rect x="52" y="4.9" width="10" height="1.3" fill="#57b357" opacity="0.5"/><rect x="3" y="6.9" width="2" height="1.3" fill="#57b357" opacity="0.5"/><rect x="6" y="6.9" width="3" height="1.3" fill="#57b357" opacity="0.5"/><rect x="10" y="6.9" width="7" height="1.3" fill="#57b357" opacity="0.5"/><rect x="18" y="6.9" width="11" height="1.3" fill="#57b357" opacity="0.5"/><rect x="30" y="6.9" width="5" height="1.3" fill="#57b357" opacity="0.5"/><rect x="36" y="6.9" width="29" height="1.3" fill="#57b357" opacity="0.5"/><rect x="3" y="8.9" width="51" height="1.3" fill="#57b357" opacity="0.5"/><rect x="3" y="10.9" width="9" height="1.3" fill="#909090" opacity="0.4"/><rect x="14" y="10.9" width="8" height="1.3" fill="#909090" opacity="0.4"/><rect x="3" y="12.9" width="16" height="1.3" fill="#909090" opacity="0.4"/><rect x="21" y="12.9" width="1" height="1.3" fill="#d8c84a" opacity="0.6"/><rect x="8" y="14.9" width="1" height="1.3" fill="#c8c8c8" opacity="0.5"/><rect x="12" y="16.9" width="6" height="1.3" fill="#9cdcfe" opacity="0.55"/><rect x="20" y="16.9" width="5" height="1.3" fill="#d89078" opacity="0.5"/><rect x="26" y="16.9" width="4" height="1.3" fill="#d89078" opacity="0.5"/><rect x="31" y="16.9" width="6" height="1.3" fill="#d89078" opacity="0.5"/><rect x="38" y="16.9" width="7" height="1.3" fill="#d89078" opacity="0.5"/><rect x="12" y="18.9" width="6" height="1.3" fill="#909090" opacity="0.4"/><rect x="20" y="18.9" width="10" height="1.3" fill="#909090" opacity="0.4"/><rect x="12" y="20.9" width="9" height="1.3" fill="#909090" opacity="0.4"/><rect x="23" y="20.9" width="9" height="1.3" fill="#909090" opacity="0.4"/><rect x="12" y="22.9" width="15" height="1.3" fill="#9cdcfe" opacity="0.55"/><rect x="29" y="22.9" width="8" height="1.3" fill="#d89078" opacity="0.5"/><rect x="12" y="24.9" width="2" height="1.3" fill="#57b357" opacity="0.5"/><rect x="15" y="24.9" width="2" height="1.3" fill="#57b357" opacity="0.5"/><rect x="18" y="24.9" width="3" height="1.3" fill="#57b357" opacity="0.5"/><rect x="22" y="24.9" width="4" height="1.3" fill="#57b357" opacity="0.5"/><rect x="27" y="24.9" width="7" height="1.3" fill="#57b357" opacity="0.5"/><rect x="35" y="24.9" width="6" height="1.3" fill="#57b357" opacity="0.5"/><rect x="42" y="24.9" width="11" height="1.3" fill="#57b357" opacity="0.5"/><rect x="54" y="24.9" width="4" height="1.3" fill="#57b357" opacity="0.5"/><rect x="59" y="24.9" width="4" height="1.3" fill="#57b357" opacity="0.5"/><rect x="64" y="24.9" width="2" height="1.3" fill="#57b357" opacity="0.5"/><rect x="67" y="24.9" width="6" height="1.3" fill="#57b357" opacity="0.5"/><rect x="12" y="26.9" width="3" height="1.3" fill="#57b357" opacity="0.5"/><rect x="16" y="26.9" width="7" height="1.3" fill="#57b357" opacity="0.5"/><rect x="24" y="26.9" width="5" height="1.3" fill="#57b357" opacity="0.5"/><rect x="12" y="28.9" width="9" height="1.3" fill="#9cdcfe" opacity="0.55"/><rect x="23" y="28.9" width="48" height="1.3" fill="#d89078" opacity="0.5"/><rect x="12" y="30.9" width="9" height="1.3" fill="#d89078" opacity="0.5"/><rect x="12" y="32.9" width="6" height="1.3" fill="#9cdcfe" opacity="0.55"/><rect x="20" y="32.9" width="3" height="1.3" fill="#d8c84a" opacity="0.6"/><rect x="12" y="34.9" width="5" height="1.3" fill="#9cdcfe" opacity="0.55"/><rect x="19" y="34.9" width="25" height="1.3" fill="#d89078" opacity="0.5"/><rect x="12" y="36.9" width="13" height="1.3" fill="#9cdcfe" opacity="0.55"/><rect x="27" y="36.9" width="5" height="1.3" fill="#569cd6" opacity="0.5"/><rect x="12" y="38.9" width="2" height="1.3" fill="#57b357" opacity="0.5"/><rect x="15" y="38.9" width="6" height="1.3" fill="#57b357" opacity="0.5"/><rect x="22" y="38.9" width="9" height="1.3" fill="#57b357" opacity="0.5"/><rect x="32" y="38.9" width="1" height="1.3" fill="#57b357" opacity="0.5"/><rect x="34" y="38.9" width="3" height="1.3" fill="#57b357" opacity="0.5"/><rect x="38" y="38.9" width="7" height="1.3" fill="#57b357" opacity="0.5"/><rect x="46" y="38.9" width="4" height="1.3" fill="#57b357" opacity="0.5"/><rect x="51" y="38.9" width="7" height="1.3" fill="#57b357" opacity="0.5"/><rect x="59" y="38.9" width="4" height="1.3" fill="#57b357" opacity="0.5"/><rect x="64" y="38.9" width="7" height="1.3" fill="#57b357" opacity="0.5"/><rect x="72" y="38.9" width="3" height="1.3" fill="#57b357" opacity="0.5"/><rect x="12" y="40.9" width="4" height="1.3" fill="#57b357" opacity="0.5"/><rect x="17" y="40.9" width="12" height="1.3" fill="#57b357" opacity="0.5"/><rect x="30" y="40.9" width="46" height="1.3" fill="#57b357" opacity="0.5"/><rect x="12" y="42.9" width="19" height="1.3" fill="#9cdcfe" opacity="0.55"/><rect x="33" y="42.9" width="1" height="1.3" fill="#d8c84a" opacity="0.6"/><rect x="16" y="44.9" width="8" height="1.3" fill="#9cdcfe" opacity="0.55"/><rect x="26" y="44.9" width="17" height="1.3" fill="#d89078" opacity="0.5"/><rect x="16" y="46.9" width="9" height="1.3" fill="#9cdcfe" opacity="0.55"/><rect x="27" y="46.9" width="9" height="1.3" fill="#d89078" opacity="0.5"/><rect x="37" y="46.9" width="9" height="1.3" fill="#d89078" opacity="0.5"/><rect x="47" y="46.9" width="23" height="1.3" fill="#d89078" opacity="0.5"/><rect x="12" y="48.9" width="2" height="1.3" fill="#c8c8c8" opacity="0.5"/><rect x="12" y="50.9" width="5" height="1.3" fill="#9cdcfe" opacity="0.55"/><rect x="19" y="50.9" width="1" height="1.3" fill="#d8c84a" opacity="0.6"/><rect x="16" y="52.9" width="24" height="1.3" fill="#9cdcfe" opacity="0.55"/><rect x="42" y="52.9" width="13" height="1.3" fill="#d89078" opacity="0.5"/><rect x="12" y="54.9" width="2" height="1.3" fill="#c8c8c8" opacity="0.5"/><rect x="12" y="56.9" width="15" height="1.3" fill="#9cdcfe" opacity="0.55"/><rect x="29" y="56.9" width="1" height="1.3" fill="#d8c84a" opacity="0.6"/><rect x="16" y="58.9" width="8" height="1.3" fill="#9cdcfe" opacity="0.55"/><rect x="26" y="58.9" width="26" height="1.3" fill="#d89078" opacity="0.5"/><rect x="12" y="60.9" width="1" height="1.3" fill="#c8c8c8" opacity="0.5"/><rect x="8" y="62.9" width="2" height="1.3" fill="#c8c8c8" opacity="0.5"/><rect x="8" y="64.9" width="1" height="1.3" fill="#c8c8c8" opacity="0.5"/><rect x="12" y="66.9" width="6" height="1.3" fill="#9cdcfe" opacity="0.55"/><rect x="20" y="66.9" width="5" height="1.3" fill="#d89078" opacity="0.5"/><rect x="26" y="66.9" width="4" height="1.3" fill="#d89078" opacity="0.5"/><rect x="31" y="66.9" width="8" height="1.3" fill="#d89078" opacity="0.5"/><rect x="12" y="68.9" width="6" height="1.3" fill="#909090" opacity="0.4"/><rect x="20" y="68.9" width="10" height="1.3" fill="#909090" opacity="0.4"/><rect x="12" y="70.9" width="9" height="1.3" fill="#909090" opacity="0.4"/><rect x="23" y="70.9" width="9" height="1.3" fill="#909090" opacity="0.4"/><rect x="12" y="72.9" width="11" height="1.3" fill="#9cdcfe" opacity="0.55"/><rect x="25" y="72.9" width="24" height="1.3" fill="#d89078" opacity="0.5"/><rect x="8" y="74.9" width="1" height="1.3" fill="#c8c8c8" opacity="0.5"/><rect x="4" y="76.9" width="1" height="1.3" fill="#c8c8c8" opacity="0.5"/><rect x="0" y="78.9" width="1" height="1.3" fill="#c8c8c8" opacity="0.5"/></svg>
<div class="abs" style="left:1006px;top:0;width:1px;height:596px;background:#303030"></div>
<div class="abs" style="left:1011px;top:0;width:5px;height:9px;background:#b4b4b4"></div>
<div class="abs" style="left:1011px;top:384px;width:6px;height:9px;background:#8c8c8c"></div>
<div class="abs" style="left:774px;top:538px;width:141px;height:37px;background:#0a59b0;border-radius:5px;color:#fff;font-size:13px;line-height:38px;text-align:center;box-shadow:0 0 6px rgba(0,0,0,.5);letter-spacing:.319px">Add Configuration...</div>
</div>
<!-- STATUS BAR -->
<div id="status" class="abs">
  <svg class="abs" style="left:14.500px;top:4px" width="10" height="14" viewBox="0 0 10 14"><g fill="none" stroke="#fff" stroke-width="1.100"><circle cx="2" cy="2" r="1.400"/><circle cx="2" cy="12" r="1.400"/><circle cx="8" cy="3.500" r="1.400"/><path d="M2 3.400v7.200M8 4.900c0 3-6 2.500-6 5.500"/></g></svg>
  <span class="si" style="left:27.2px;letter-spacing:0.376px">master*</span>
  <svg class="abs" style="left:87.500px;top:5.500px" width="11" height="11" viewBox="0 0 11 11"><g fill="none" stroke="#fff" stroke-width="1.700"><path d="M1.200 4.500A4.400 4.400 0 0 1 8.800 2.600M9.800 6.500A4.400 4.400 0 0 1 2.200 8.400"/></g><path d="M10.800.5v4h-4zM.2 10.500v-4h4z" fill="#fff"/></svg>
  <svg class="abs" style="left:114.500px;top:4px" width="13" height="13" viewBox="0 0 13 13"><circle cx="6.500" cy="6.500" r="6.500" fill="#fff"/><path d="M4 4l5 5M9 4L4 9" stroke="#0b72d9" stroke-width="1.800"/></svg>
  <span class="si" style="left:132px">0</span>
  <svg class="abs" style="left:143.500px;top:4px" width="13" height="13" viewBox="0 0 13 13"><path d="M6.500 0L13 12.500H0z" fill="#fff"/><path d="M6.500 4.500v4.300" stroke="#0b72d9" stroke-width="1.600"/><circle cx="6.500" cy="10.500" r=".9" fill="#0b72d9"/></svg>
  <span class="si" style="left:159.500px">0</span>
  <svg class="abs" style="left:183px;top:3px" width="11" height="14" viewBox="0 0 11 14"><path d="M5.800 0c.7 2.300 4.700 4.400 4.700 8.600A5 5 0 0 1 5.500 14 5 5 0 0 1 .5 8.800C.5 6.600 1.800 5.200 2.400 3.600c.6.700.9 1.500.9 2.300C4.800 4.800 5.900 2.700 5.800 0z" fill="#3fe04a"/><path d="M5.500 13.300c-1.300 0-2.200-1-2.200-2.200 0-1.500 1.600-2.200 2-3.900.9 1 2.400 2.300 2.400 3.900 0 1.200-.9 2.200-2.200 2.200z" fill="#0b72d9"/></svg>
  <svg class="abs" style="left:209.500px;top:4.500px" width="13" height="11" viewBox="0 0 13 11"><path d="M0 1A1 1 0 0 1 1 0h4l1.300 1.600H12a1 1 0 0 1 1 1V10a1 1 0 0 1-1 1H1a1 1 0 0 1-1-1z" fill="#fff"/></svg>
  <span class="si" style="left:225.6px;letter-spacing:0.331px">Reactivities.sln</span>
  <span class="si" style="left:797.6px;letter-spacing:-0.142px">Ln 1, Col 1</span>
  <span class="si" style="left:870.6px;letter-spacing:0.32px">Spaces: 4</span>
  <span class="si" style="left:943.3px;letter-spacing:0.275px">UTF-8</span>
  <span class="si" style="left:995.6px;letter-spacing:-1.1px">LF</span>
  <span class="si" style="left:1025.3px;letter-spacing:0.299px">JSON with Comments</span>
  <span class="si" style="left:1165.5px;letter-spacing:0.233px">Prettier</span>
  <svg class="abs" style="left:1223px;top:4px" width="13" height="13" viewBox="0 0 13 13"><circle cx="6.500" cy="6.500" r="6.500" fill="#fff"/><circle cx="4.300" cy="4.800" r="1" fill="#0b72d9"/><circle cx="8.700" cy="4.800" r="1" fill="#0b72d9"/><path d="M3 7.500a3.600 3.600 0 0 0 7 0z" fill="#0b72d9"/></svg>
  <svg class="abs" style="left:1252.500px;top:4px" width="12" height="13" viewBox="0 0 12 13"><path d="M6 0c.7 0 1.100.4 1.100 1 2 .5 3 2.200 3 4.300 0 2.600.8 3.700 1.900 4.500V10.500H0V9.800c1.100-.8 1.900-1.900 1.900-4.500 0-2.100 1-3.800 3-4.300C4.900.4 5.300 0 6 0z" fill="#fff"/><path d="M4.500 11.300h3a1.500 1.500 0 0 1-3 0z" fill="#fff"/></svg>
</div>

</body>
</html>
